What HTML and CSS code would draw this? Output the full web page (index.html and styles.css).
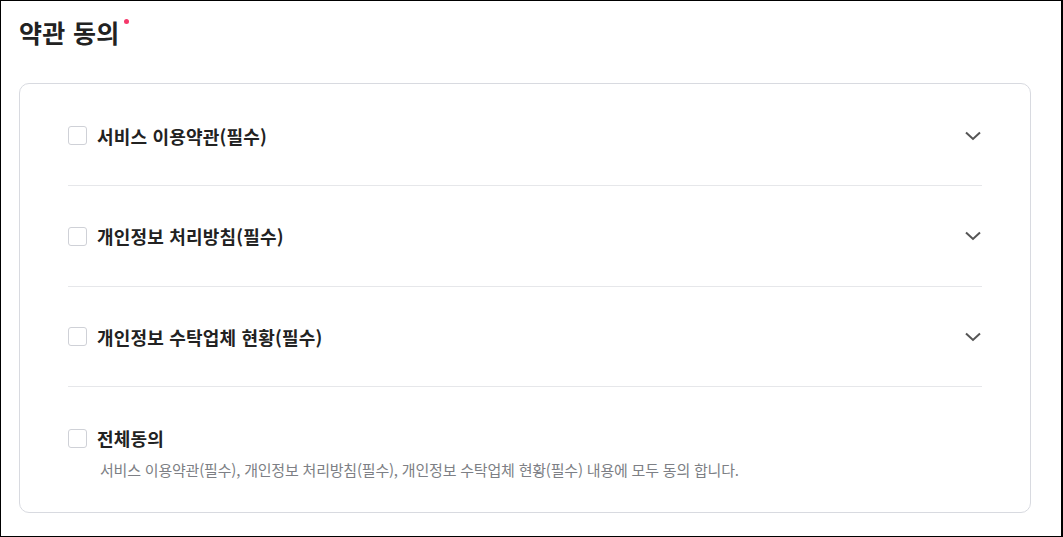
FILE: index.html
```html
<!DOCTYPE html>
<html lang="ko">
<head>
<meta charset="UTF-8">
<title>약관 동의</title>
<link rel="stylesheet" href="styles.css">
</head>
<body>
<div class="frame">
	<h2 class="title">약관 동의<span class="req"></span></h2>

	<div class="terms_box">
		<div class="term_row">
			<label class="term_label"><span class="chk"></span>서비스 이용약관(필수)</label>
			<svg class="arrow" width="18" height="10" viewBox="0 0 18 10"><path d="M2 1.5 L9 8 L16 1.5" fill="none" stroke="#555" stroke-width="2"/></svg>
		</div>
		<div class="term_row">
			<label class="term_label"><span class="chk"></span>개인정보 처리방침(필수)</label>
			<svg class="arrow" width="18" height="10" viewBox="0 0 18 10"><path d="M2 1.5 L9 8 L16 1.5" fill="none" stroke="#555" stroke-width="2"/></svg>
		</div>
		<div class="term_row">
			<label class="term_label"><span class="chk"></span>개인정보 수탁업체 현황(필수)</label>
			<svg class="arrow" width="18" height="10" viewBox="0 0 18 10"><path d="M2 1.5 L9 8 L16 1.5" fill="none" stroke="#555" stroke-width="2"/></svg>
		</div>
		<div class="term_all">
			<label class="term_label"><span class="chk"></span>전체동의</label>
			<p class="desc">서비스 이용약관(필수), 개인정보 처리방침(필수), 개인정보 수탁업체 현황(필수) 내용에 모두 동의 합니다.</p>
		</div>
	</div>
</div>
</body>
</html>
```
FILE: styles.css
```css
html, body{
	margin:0; padding:0;
	background-color:#ffffff;
}
.frame{
	box-sizing:border-box;
	width:1063px; height:537px;
	border:1px solid #000000;
	border-right-width:2px;
	padding:0 30px 0 18px;
	font-family:"Noto Sans CJK KR", "Noto Sans", sans-serif;
	color:#222222;
}
.title{
	margin:0; padding-top:12px;
	height:82px; box-sizing:border-box;
	font-size:25px; font-weight:700;
	line-height:38px;
	letter-spacing:0.3px;
}
.req{
	display:inline-block;
	width:5px; height:5px;
	border-radius:50%;
	background-color:#f5386a;
	vertical-align:top;
	margin:6px 0 0 4px;
}
.terms_box{
	border:1px solid #d8dae0;
	border-radius:10px;
	padding:0 48px;
	height:430px;
	box-sizing:border-box;
}
.term_row{
	height:101px;
	box-sizing:border-box;
	border-bottom:1px solid #e6e7ea;
	display:flex;
	align-items:center;
	justify-content:space-between;
}
.term_row:first-child{
	height:102px;
	padding-top:2px;
}
.term_row:nth-child(3){
	height:100px;
}
.term_label{
	display:flex;
	align-items:center;
	font-size:18px; font-weight:700;
	color:#222222;
	letter-spacing:0.2px;
}
.chk{
	display:inline-block;
	width:17px; height:17px;
	border:1px solid #cfd1d7;
	border-radius:3px;
	margin-right:10px;
	background-color:#ffffff;
}
.arrow{
	display:block;
}
.term_all{
	padding-top:38px;
}
.desc{
	margin:8px 0 0 32px;
	font-size:15px;
	color:#7d7f85;
	letter-spacing:-0.2px;
}
```
